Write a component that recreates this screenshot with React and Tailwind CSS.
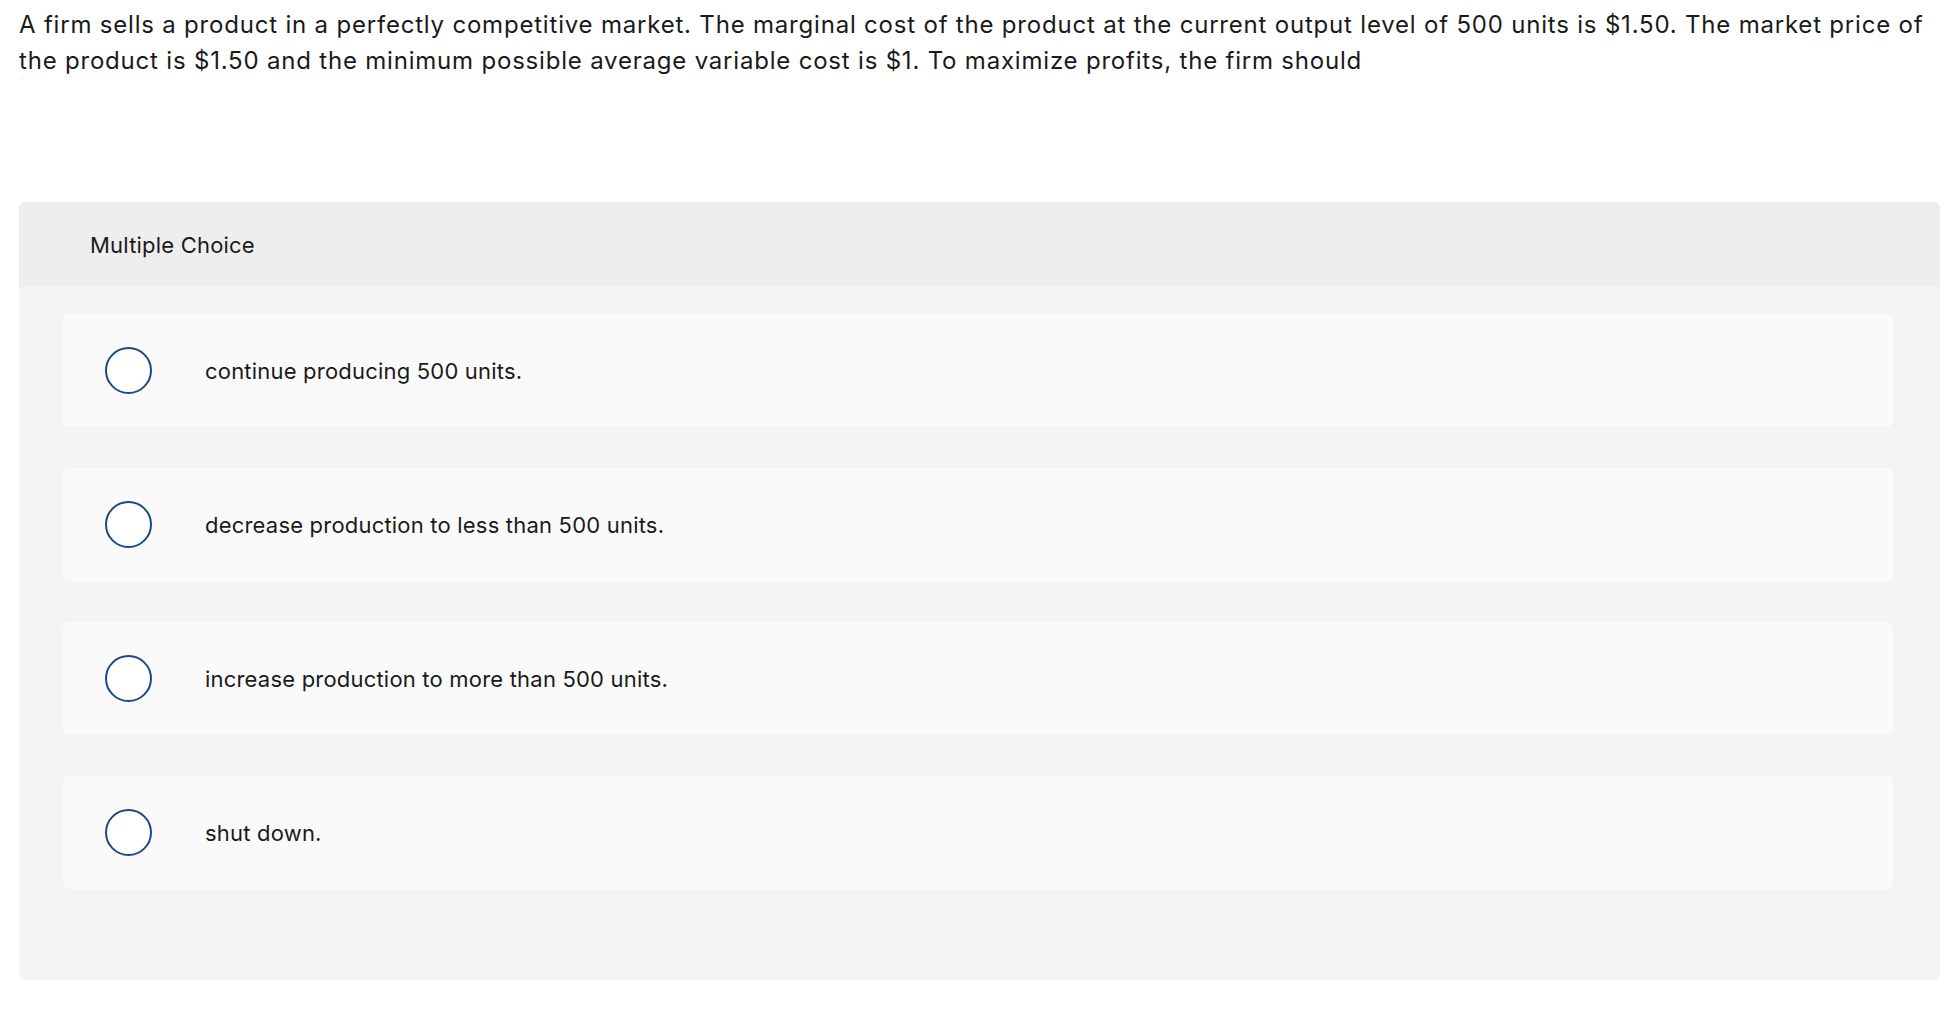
const options = [
  'continue producing 500 units.',
  'decrease production to less than 500 units.',
  'increase production to more than 500 units.',
  'shut down.',
]

export default function App() {
  return (
    <div className="min-h-screen bg-white px-[19px] pt-[7px] text-[#1a1a1a]" style={{ fontFamily: 'Inter, "Liberation Sans", sans-serif' }}>
      <p className="text-[24px] leading-[36px] tracking-[0.8px]">
        A firm sells a product in a perfectly competitive market. The marginal cost of the product at the current output level of 500 units is $1.50. The market price of the product is $1.50 and the minimum possible average variable cost is $1. To maximize profits, the firm should
      </p>

      <section className="mt-[123px] mr-[-7px] overflow-hidden rounded-md bg-[#f4f4f4]">
        <div className="flex h-[85px] items-center bg-[#eeeeee] pl-[71px] pt-[2px] text-[22px] tracking-[0.2px]">Multiple Choice</div>
        <div className="flex flex-col gap-[41px] pl-[44px] pr-[47px] pt-[27px] pb-[91px]">
          {options.map((text) => (
            <label key={text} className="flex h-[113px] items-center rounded-md bg-[#fafafa] pl-[42px]">
              <span className="h-[47px] w-[47px] shrink-0 rounded-full border-2 border-[#18498a] bg-white" />
              <span className="ml-[53px] pt-[2px] text-[22px] tracking-[0.2px]">{text}</span>
            </label>
          ))}
        </div>
      </section>
    </div>
  )
}
